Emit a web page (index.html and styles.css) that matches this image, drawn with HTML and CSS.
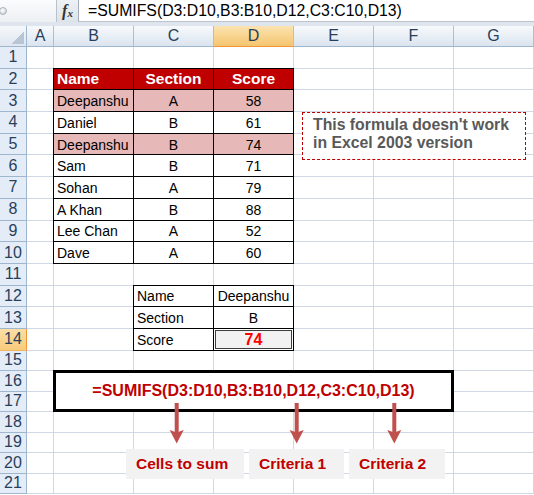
FILE: index.html
```html
<!DOCTYPE html>
<html>
<head>
<meta charset="utf-8">
<link rel="stylesheet" href="styles.css">
</head>
<body>
<div class="fbar">
  <div class="namebox"><span class="dot"></span></div>
  <div class="fxbox"><span class="fx">f</span><span class="fx x">x</span></div>
  <div class="finput">=SUMIFS(D3:D10,B3:B10,D12,C3:C10,D13)</div>
</div>
<div class="gap"></div>
<div class="sheet">
  <div class="corner"></div>
  <div class="ch">A</div><div class="ch">B</div><div class="ch">C</div><div class="ch sel">D</div><div class="ch">E</div><div class="ch">F</div><div class="ch">G</div>
  <div class="rh">1</div><div class="rh">2</div><div class="rh">3</div><div class="rh">4</div><div class="rh">5</div><div class="rh">6</div><div class="rh">7</div>
  <div class="rh">8</div><div class="rh">9</div><div class="rh">10</div><div class="rh">11</div><div class="rh">12</div><div class="rh">13</div><div class="rh sel">14</div>
  <div class="rh">15</div><div class="rh">16</div><div class="rh">17</div><div class="rh">18</div><div class="rh">19</div><div class="rh">20</div><div class="rh">21</div>
  <div class="lines">
    <i></i><i></i><i></i><i></i><i></i><i></i><i></i>
    <i></i><i></i><i></i><i></i><i></i><i></i><i></i>
    <i></i><i></i><i></i><i></i><i></i><i></i><i></i>
    <i></i><i></i><i></i><i></i><i></i><i></i><i></i>
    <i></i><i></i><i></i><i></i><i></i><i></i><i></i>
    <i></i><i></i><i></i><i></i><i></i><i></i><i></i>
    <i></i><i></i><i></i><i></i><i></i><i></i><i></i>
    <i></i><i></i><i></i><i></i><i></i><i></i><i></i>
    <i></i><i></i><i></i><i></i><i></i><i></i><i></i>
    <i></i><i></i><i></i><i></i><i></i><i></i><i></i>
    <i></i><i></i><i></i><i></i><i></i><i></i><i></i>
    <i></i><i></i><i></i><i></i><i></i><i></i><i></i>
    <i></i><i></i><i></i><i></i><i></i><i></i><i></i>
    <i></i><i></i><i></i><i></i><i></i><i></i><i></i>
    <i></i><i></i><i></i><i></i><i></i><i></i><i></i>
    <i></i><i></i><i></i><i></i><i></i><i></i><i></i>
    <i></i><i></i><i></i><i></i><i></i><i></i><i></i>
    <i></i><i></i><i></i><i></i><i></i><i></i><i></i>
    <i></i><i></i><i></i><i></i><i></i><i></i><i></i>
    <i></i><i></i><i></i><i></i><i></i><i></i><i></i>
    <i></i><i></i><i></i><i></i><i></i><i></i><i></i>
  </div>
  <div class="content">
    <div class="tbl">
      <span class="hd">Name</span><span class="hd c">Section</span><span class="hd c">Score</span>
      <span class="pk">Deepanshu</span><span class="pk c">A</span><span class="pk c">58</span>
      <span>Daniel</span><span class="c">B</span><span class="c">61</span>
      <span class="pk">Deepanshu</span><span class="pk c">B</span><span class="pk c">74</span>
      <span>Sam</span><span class="c">B</span><span class="c">71</span>
      <span>Sohan</span><span class="c">A</span><span class="c">79</span>
      <span>A Khan</span><span class="c">B</span><span class="c">88</span>
      <span>Lee Chan</span><span class="c">A</span><span class="c">52</span>
      <span>Dave</span><span class="c">A</span><span class="c">60</span>
    </div>
    <div class="note">This formula doesn't work<br>in Excel 2003 version</div>
    <div class="mini">
      <span>Name</span><span class="c">Deepanshu</span>
      <span>Section</span><span class="c">B</span>
      <span>Score</span><span class="c out">74</span>
    </div>
    <div class="fbox">=SUMIFS(D3:D10,B3:B10,D12,C3:C10,D13)</div>
    <svg class="arrows" width="507" height="60" viewBox="0 0 507 60">
      <g fill="#c0504d">
        <rect x="147.7" y="11" width="4" height="30"/>
        <path d="M142.7 38 L149.7 51.5 L156.7 38 L149.7 40.5 Z"/>
        <rect x="267.7" y="11" width="4" height="30"/>
        <path d="M262.7 38 L269.7 51.5 L276.7 38 L269.7 40.5 Z"/>
        <rect x="365.3" y="11" width="4" height="30"/>
        <path d="M360.3 38 L367.3 51.5 L374.3 38 L367.3 40.5 Z"/>
      </g>
    </svg>
    <div class="labels">
      <div class="lab w1">Cells to sum</div>
      <div class="lab w2">Criteria 1</div>
      <div class="lab w3">Criteria 2</div>
    </div>
  </div>
</div>
</body>
</html>
```
FILE: styles.css
```css
* { box-sizing: border-box; margin: 0; padding: 0; }
body {
  margin: 0;
  width: 534px;
  height: 495px;
  overflow: hidden;
  background: #fff;
  font-family: "Liberation Sans", Arial, sans-serif;
}

/* formula bar */
.fbar {
  display: flex;
  height: 22px;
  background: linear-gradient(#f3f5f8, #e2e7ed);
}
.namebox {
  width: 57px;
  display: flex;
  align-items: center;
  padding-left: 0;
  border-right: 1px solid #b9c1cb;
  background: linear-gradient(#fbfcfd, #eceff3);
}
.dot {
  width: 8px;
  height: 8px;
  border-radius: 50%;
  margin-left: -1px;
  border: 1px solid #a9b1bc;
  background: radial-gradient(circle at 40% 35%, #ffffff, #c3c9d1);
}
.fxbox {
  width: 21px;
  display: flex;
  align-items: center;
  justify-content: center;
  padding-bottom: 1px;
  color: #333;
  background: linear-gradient(#eef1f5, #dde3ea);
}
.fx {
  font-family: "Liberation Serif", "Times New Roman", serif;
  font-style: italic;
  font-weight: bold;
  font-size: 16px;
}
.fx.x { font-size: 11px; padding-top: 4px; }
.finput {
  flex: 1;
  display: flex;
  align-items: center;
  padding: 1px 0 0 9px;
  background: #fff;
  border-left: 1px solid #a4adb9;
  border-bottom: 1px solid #bcc4ce;
  font-size: 15.8px;
  color: #000;
  white-space: nowrap;
}
.gap {
  height: 4px;
  background: #dfe5ec;
}

/* sheet grid */
.sheet {
  display: grid;
  grid-template-columns: 27px 27px repeat(6, 80px);
  grid-template-rows: 21px repeat(14, 21.7px) repeat(7, 20.5px);
}
.corner {
  grid-area: 1 / 1 / 2 / 2;
  border-right: 1px solid #9eb6ce;
  border-bottom: 1px solid #9eb6ce;
  background:
    linear-gradient(135deg, transparent 50%, #b8c5d5 50%) right 2px bottom 2px / 13px 13px no-repeat,
    linear-gradient(#f5f8fb, #dfe6ef);
}
.ch {
  grid-row: 1;
  display: flex;
  align-items: center;
  justify-content: center;
  font-size: 16px;
  color: #283f5c;
  background: linear-gradient(#f7f9fc, #e8eef5 55%, #dbe3ee);
  border-right: 1px solid #aac0d6;
  border-bottom: 1px solid #9eb6ce;
}
.ch.sel {
  background: linear-gradient(#fbe3b2, #f8d38c 55%, #f5c56f);
  border-bottom-color: #f29536;
  border-right-color: #f2b65e;
}
.rh {
  grid-column: 1;
  display: flex;
  align-items: center;
  justify-content: center;
  font-size: 16px;
  color: #283f5c;
  background: #e4ecf7;
  border-right: 1px solid #9eb6ce;
  border-bottom: 1px solid #9eb6ce;
}
.rh.sel {
  background: linear-gradient(#fbdfa6, #f7cb7b);
  border-right-color: #f29536;
  border-bottom-color: #f2b65e;
}

.lines, .content {
  grid-area: 2 / 2 / -1 / -1;
  display: grid;
  grid-template-columns: 27px repeat(6, 80px);
  grid-template-rows: repeat(14, 21.7px) repeat(7, 20.5px);
}
.lines i {
  border-right: 1px solid #d0d7e5;
  border-bottom: 1px solid #d0d7e5;
}

/* data table */
.tbl {
  grid-column: 2 / 5;
  grid-row: 2 / 11;
  margin: -1px 0 0 -1px;
  display: grid;
  grid-template-columns: repeat(3, 1fr);
  grid-template-rows: repeat(9, 1fr);
  border-left: 1px solid #000;
  border-top: 1px solid #000;
  background: #fff;
  font-size: 14px;
  color: #000;
}
.tbl span, .mini span {
  display: flex;
  align-items: center;
  padding: 1px 3px 0;
  border-right: 1px solid #000;
  border-bottom: 1px solid #000;
  white-space: nowrap;
}
.c { justify-content: center; }
.tbl .hd {
  background: #c00000;
  color: #fff;
  font-weight: bold;
  font-size: 15.5px;
  padding-top: 0;
  padding-bottom: 1px;
}
.tbl .pk { background: #e6b8b7; }

/* note */
.note {
  grid-column: 5 / 8;
  grid-row: 4 / 7;
  align-self: start;
  justify-self: start;
  margin-left: 8px;
  width: 224px;
  border: 1px dashed #c00000;
  background: #fff;
  padding: 3px 0 7px 10px;
  font-weight: bold;
  font-size: 15.8px;
  line-height: 18px;
  color: #595959;
}

/* lookup table */
.mini {
  grid-column: 3 / 5;
  grid-row: 12 / 15;
  margin: -1px 0 0 -1px;
  display: grid;
  grid-template-columns: repeat(2, 1fr);
  grid-template-rows: repeat(3, 1fr);
  border-left: 1px solid #000;
  border-top: 1px solid #000;
  background: #fff;
  font-size: 14px;
  color: #000;
}
.mini .out {
  background: #f2f2f2;
  box-shadow: inset 0 0 0 1px #ffffff, inset 0 0 0 2px #3f3f3f;
  color: #ff0000;
  font-weight: bold;
  font-size: 16px;
}

/* formula callout */
.fbox {
  grid-column: 2 / 7;
  grid-row: 16 / 18;
  margin: -1px 0 0 -1px;
  border: 3px solid #000;
  background: #fff;
  display: flex;
  align-items: center;
  justify-content: center;
  font-weight: bold;
  font-size: 16px;
  color: #c00000;
  white-space: nowrap;
}
.arrows {
  grid-column: 1 / -1;
  grid-row: 17 / 19;
  align-self: start;
  overflow: visible;
}
.labels {
  grid-column: 1 / -1;
  grid-row: 19 / 22;
  display: flex;
  align-items: flex-start;
  gap: 5px;
  padding: 16px 0 0 99px;
}
.lab {
  height: 30px;
  display: flex;
  align-items: center;
  padding-left: 10px;
  background: #f2f2f2;
  color: #c00000;
  font-weight: bold;
  font-size: 15.5px;
  white-space: nowrap;
}
.w1 { width: 118px; }
.w2 { width: 95px; }
.w3 { width: 96px; }
```
